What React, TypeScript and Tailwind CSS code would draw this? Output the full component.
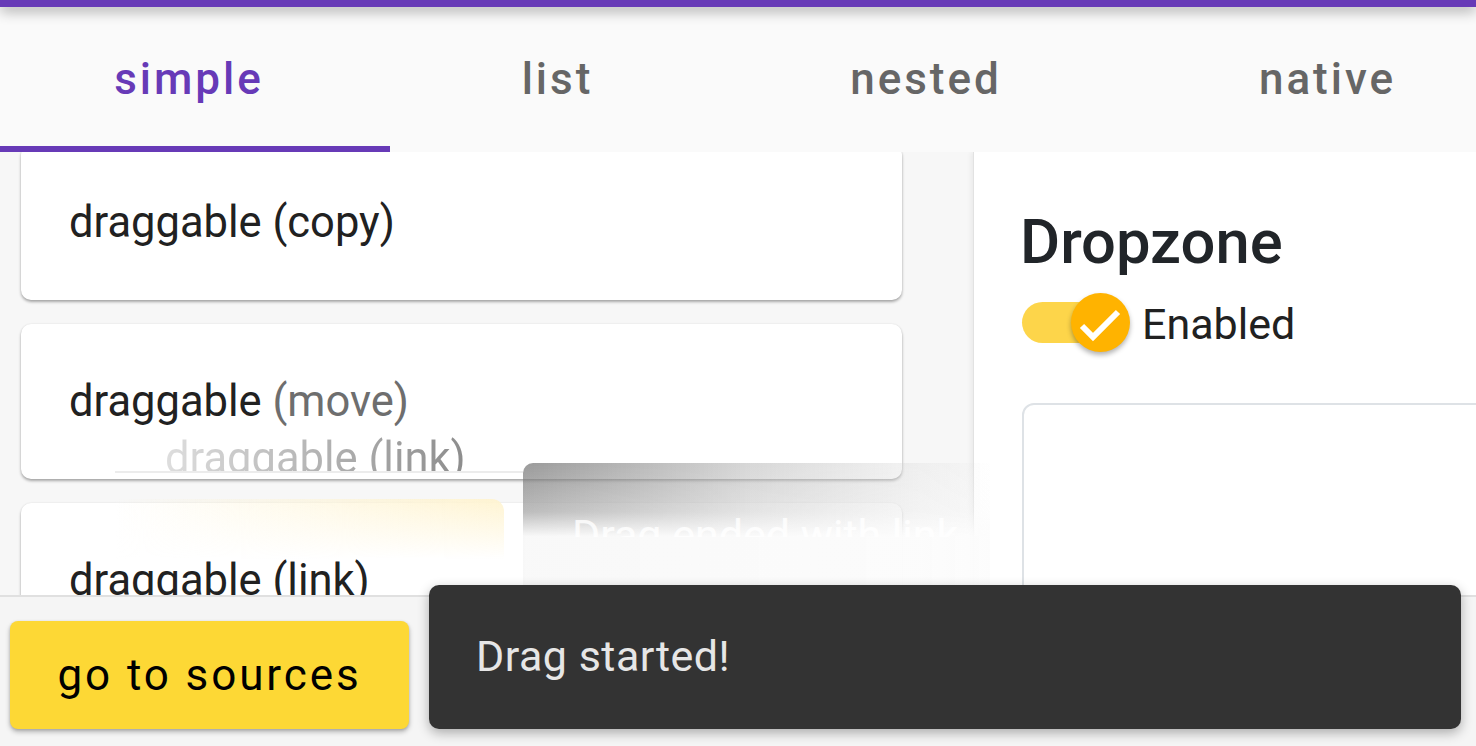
import React from "react";

const tabs = [
  { label: "simple", w: "w-[378px]", active: true },
  { label: "list", w: "w-[359px]", active: false },
  { label: "nested", w: "w-[378px]", active: false },
  { label: "native", w: "w-[425px]", active: false },
];

function Card({ children }: { children: React.ReactNode }) {
  return (
    <div className="h-[155px] shrink-0 bg-white rounded-[10px] shadow-[0_2px_3px_rgba(0,0,0,0.32),0_0_2px_rgba(0,0,0,0.08)] flex items-center pl-[48px] pt-[2px] text-[43.5px] leading-[1.2] text-[#212121]">
      {children}
    </div>
  );
}

export default function App() {
  return (
    <div className="relative w-[1476px] h-[746px] overflow-hidden flex flex-col bg-[#f7f7f7] font-['Roboto',sans-serif]">
      {/* top purple bar */}
      <div className="relative z-20 h-[7px] shrink-0 bg-[#673ab7] shadow-[0_3px_14px_rgba(0,0,0,0.45)]" />

      {/* tabs */}
      <div className="relative z-10 h-[145px] shrink-0 bg-[#fafafa] flex overflow-hidden">
        {tabs.map((t) => (
          <div
            key={t.label}
            className={`${t.w} shrink-0 flex items-center justify-center text-[44px] leading-[1.2] font-medium tracking-[3px] ${
              t.active ? "text-[#673ab7]" : "text-[#666666]"
            }`}
          >
            {t.label}
          </div>
        ))}
        <div className="absolute left-0 bottom-0 w-[390px] h-[6px] bg-[#673ab7]" />
      </div>

      {/* main */}
      <div className="flex-1 min-h-0 flex">
        <div className="w-[973px] shrink-0 overflow-hidden bg-[#f7f7f7]">
          <div className="-mt-[7px] pl-[21px] pr-[71px] flex flex-col gap-[24px]">
            <Card>draggable (copy)</Card>
            <Card>
              <span>
                draggable <span className="text-[#6e6e6e]">(move)</span>
              </span>
            </Card>
            <Card>draggable (link)</Card>
          </div>
        </div>
        <div className="flex-1 bg-white border-l border-[#e2e2e2] shadow-[-2px_0_5px_rgba(0,0,0,0.06)] pl-[48px] pt-[54px] overflow-hidden">
          <div className="-ml-[2px] text-[61.5px] leading-[72px] font-medium text-[#212529]">Dropzone</div>
          <div className="mt-[15px] flex items-center h-[60px]">
            <div className="relative w-[108px] h-[60px] shrink-0">
              <div className="absolute left-0 top-[9px] w-[100px] h-[41px] rounded-full bg-[#fdd54a]" />
              <div className="absolute left-[49px] top-0 w-[59px] h-[59px] rounded-full bg-[#ffb300] shadow-[0_3px_5px_rgba(0,0,0,0.3)]">
                <svg viewBox="0 0 59 59" className="w-[59px] h-[59px]">
                  <polyline points="11,33 22,44 47,19" fill="none" stroke="#ffffff" strokeWidth="6" />
                </svg>
              </div>
            </div>
            <span className="ml-[12px] pt-[2px] text-[43px] leading-[50px] text-[#212121]">Enabled</span>
          </div>
          <div className="mt-[50px] w-[600px] h-[400px] border-2 border-[#dee2e6] rounded-[12px]" />
        </div>
      </div>

      {/* bottom bar */}
      <div className="relative h-[151px] shrink-0 border-t-2 border-[#e0e0e0] bg-[#f5f5f5] pl-[10px] pt-[24px] z-10">
        <div className="w-[399px] h-[108px] rounded-[8px] bg-[#fdd835] shadow-[0_3px_5px_rgba(0,0,0,0.25),0_1px_3px_rgba(0,0,0,0.15)] flex items-center justify-center text-[44px] leading-[1.2] font-normal tracking-[2.9px] text-black">
          go to sources
        </div>
      </div>

      {/* ghost drag image */}
      <div className="absolute left-[115px] top-[428px] w-[408px] h-[45px] border-b-2 border-[#ececec] overflow-hidden">
        <div className="pl-[50px] pt-[5px] text-[43.5px] leading-[1.2] bg-gradient-to-r from-[#ececec] to-[#8c8c8c] bg-clip-text text-transparent w-fit pr-[2px]">
          draggable (link)
        </div>
      </div>

      {/* faint yellow ghost */}
      <div className="absolute left-[115px] top-[499px] w-[389px] h-[60px] rounded-tr-[12px] bg-[linear-gradient(to_bottom,rgba(255,255,255,0)_0%,rgba(255,255,255,1)_100%),linear-gradient(to_right,rgba(255,255,255,0)_0%,rgba(255,243,205,0.9)_100%)]" />

      {/* fading snackbar ghost */}
      <div className="absolute left-[523px] top-[463px] w-[467px] h-[122px] rounded-tl-[10px] overflow-hidden bg-[linear-gradient(to_bottom,rgba(252,252,252,0)_0%,rgba(252,252,252,0.35)_40%,rgba(252,252,252,0.96)_60%,rgba(252,252,252,0.96)_100%),linear-gradient(to_right,rgba(100,100,100,0.65)_0%,rgba(170,170,170,0.45)_50%,rgba(220,220,220,0.3)_85%,rgba(240,240,240,0)_100%)]">
        <div className="h-[74px] overflow-hidden pl-[49px] pt-[47px] text-[43px] leading-[1.2] text-white/80 whitespace-nowrap">
          Drag ended with link
        </div>
      </div>

      {/* snackbar */}
      <div className="absolute z-30 left-[429px] top-[585px] w-[1032px] h-[144px] rounded-[10px] bg-[#333333] shadow-[0_4px_12px_rgba(0,0,0,0.3)] flex items-center pl-[47px] text-[43px] leading-[1.2] tracking-[0.5px] text-[#e6e6e6]">
        Drag started!
      </div>
    </div>
  );
}
